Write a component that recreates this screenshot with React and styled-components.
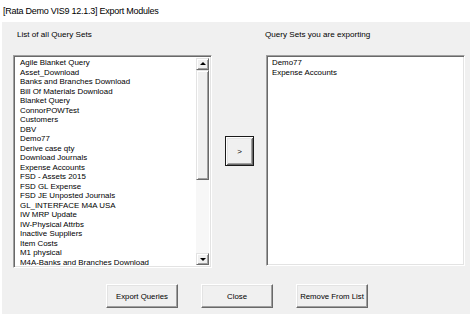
import React from "react";
import styled, { createGlobalStyle } from "styled-components";

const Global = createGlobalStyle`
  html, body { margin: 0; padding: 0; background: #ffffff; }
  body { width: 474px; height: 320px; overflow: hidden; font-family: "Liberation Sans", Arial, sans-serif; }
`;

const Window = styled.div`
  width: 474px;
  height: 320px;
  background: #ffffff;
  display: flex;
  flex-direction: column;
`;

const TitleBar = styled.div`
  height: 22px;
  padding-left: 3px;
  display: flex;
  align-items: center;
  font-size: 9px;
  color: #000;
  letter-spacing: -0.25px;
`;

const Body = styled.div`
  margin-left: 2px;
  width: 468px;
  height: 292px;
  background: #f0f0f0;
  box-sizing: border-box;
  padding: 6px 0 0 11px;
  display: flex;
  flex-direction: column;
`;

const Columns = styled.div`
  display: flex;
  align-items: flex-start;
`;

const Column = styled.div`
  display: flex;
  flex-direction: column;
  width: ${(p) => p.$width}px;
`;

const Label = styled.div`
  height: 14px;
  line-height: 14px;
  margin: 0 0 13px ${(p) => p.$indent}px;
  font-size: 8.1px;
  color: #000;
`;

const ListBox = styled.div`
  height: ${(p) => p.$height}px;
  box-sizing: border-box;
  background: #ffffff;
  border-top: 1px solid #a0a0a0;
  border-left: 1px solid #a0a0a0;
  border-right: 1px solid #ffffff;
  border-bottom: 1px solid #ffffff;
  box-shadow: inset 1px 1px 0 #696969, inset -1px -1px 0 #e3e3e3;
  display: flex;
  overflow: hidden;
`;

const Items = styled.div`
  flex: 1;
  padding: 2px 0 0 ${(p) => p.$pad}px;
  display: flex;
  flex-direction: column;
`;

const Item = styled.div`
  height: 9.5px;
  line-height: 9.5px;
  font-size: 7.9px;
  color: #000;
  white-space: nowrap;
`;

const ScrollBar = styled.div`
  width: 13px;
  margin: 2px 2px 2px 0;
  background: #f7f7f7;
  display: flex;
  flex-direction: column;
`;

const ScrollButton = styled.div`
  height: 12px;
  box-sizing: border-box;
  background: #f0f0f0;
  border-top: 1px solid #e3e3e3;
  border-left: 1px solid #e3e3e3;
  border-right: 1px solid #696969;
  border-bottom: 1px solid #696969;
  box-shadow: inset 1px 1px 0 #ffffff, inset -1px -1px 0 #a0a0a0;
  display: flex;
  align-items: center;
  justify-content: center;
`;

const Arrow = styled.div`
  width: 0;
  height: 0;
  border-left: 3px solid transparent;
  border-right: 3px solid transparent;
  ${(p) =>
    p.$down
      ? "border-top: 3px solid #000; margin-top: 1px;"
      : "border-bottom: 3px solid #000; margin-bottom: 1px;"}
`;

const Thumb = styled.div`
  height: ${(p) => p.$height}px;
  box-sizing: border-box;
  background: #f0f0f0;
  border-top: 1px solid #e3e3e3;
  border-left: 1px solid #e3e3e3;
  border-right: 1px solid #696969;
  border-bottom: 1px solid #696969;
  box-shadow: inset 1px 1px 0 #ffffff, inset -1px -1px 0 #a0a0a0;
`;

const Track = styled.div`
  flex: 1;
`;

const Middle = styled.div`
  width: 29px;
  margin: 108px 12px 0 13px;
`;

const DefaultButton = styled.button`
  width: 29px;
  height: 30px;
  box-sizing: border-box;
  padding: 0;
  background: #f0f0f0;
  border: 1px solid #1a1a1a;
  box-shadow: inset 1px 1px 0 #ffffff, inset -1px -1px 0 #696969, inset 2px 2px 0 #e3e3e3, inset -2px -2px 0 #a0a0a0;
  font-family: "Liberation Sans", Arial, sans-serif;
  font-size: 8px;
  color: #000;
  display: flex;
  align-items: center;
  justify-content: center;
`;

const ButtonRow = styled.div`
  display: flex;
  gap: 23px;
  margin: 16px 0 0 93px;
`;

const PushButton = styled.button`
  width: 72px;
  height: 24px;
  box-sizing: border-box;
  padding: 0;
  background: #f0f0f0;
  border-top: 1px solid #ffffff;
  border-left: 1px solid #ffffff;
  border-right: 1px solid #696969;
  border-bottom: 1px solid #696969;
  box-shadow: inset -1px -1px 0 #a0a0a0, inset 1px 1px 0 #e3e3e3;
  font-family: "Liberation Sans", Arial, sans-serif;
  font-size: 7.8px;
  color: #000;
`;

const allSets = [
  "Agile Blanket Query",
  "Asset_Download",
  "Banks and Branches Download",
  "Bill Of Materials Download",
  "Blanket Query",
  "ConnorPOWTest",
  "Customers",
  "DBV",
  "Demo77",
  "Derive case qty",
  "Download Journals",
  "Expense Accounts",
  "FSD - Assets 2015",
  "FSD GL Expense",
  "FSD JE Unposted Journals",
  "GL_INTERFACE M4A USA",
  "IW MRP Update",
  "IW-Physical Attrbs",
  "Inactive Suppliers",
  "Item Costs",
  "M1 physical",
  "M4A-Banks and Branches Download",
];

const exporting = ["Demo77", "Expense Accounts"];

export default function App() {
  return (
    <Window>
      <Global />
      <TitleBar>[Rata Demo VIS9 12.1.3] Export Modules</TitleBar>
      <Body>
        <Columns>
          <Column $width={199}>
            <Label $indent={4}>List of all Query Sets</Label>
            <ListBox $height={213}>
              <Items $pad={6}>
                {allSets.map((s) => (
                  <Item key={s}>{s}</Item>
                ))}
              </Items>
              <ScrollBar>
                <ScrollButton>
                  <Arrow />
                </ScrollButton>
                <Thumb $height={110} />
                <Track />
                <ScrollButton>
                  <Arrow $down />
                </ScrollButton>
              </ScrollBar>
            </ListBox>
          </Column>
          <Middle>
            <DefaultButton>&gt;</DefaultButton>
          </Middle>
          <Column $width={199}>
            <Label $indent={-1}>Query Sets you are exporting</Label>
            <ListBox $height={211}>
              <Items $pad={5}>
                {exporting.map((s) => (
                  <Item key={s}>{s}</Item>
                ))}
              </Items>
            </ListBox>
          </Column>
        </Columns>
        <ButtonRow>
          <PushButton>Export Queries</PushButton>
          <PushButton>Close</PushButton>
          <PushButton>Remove From List</PushButton>
        </ButtonRow>
      </Body>
    </Window>
  );
}
